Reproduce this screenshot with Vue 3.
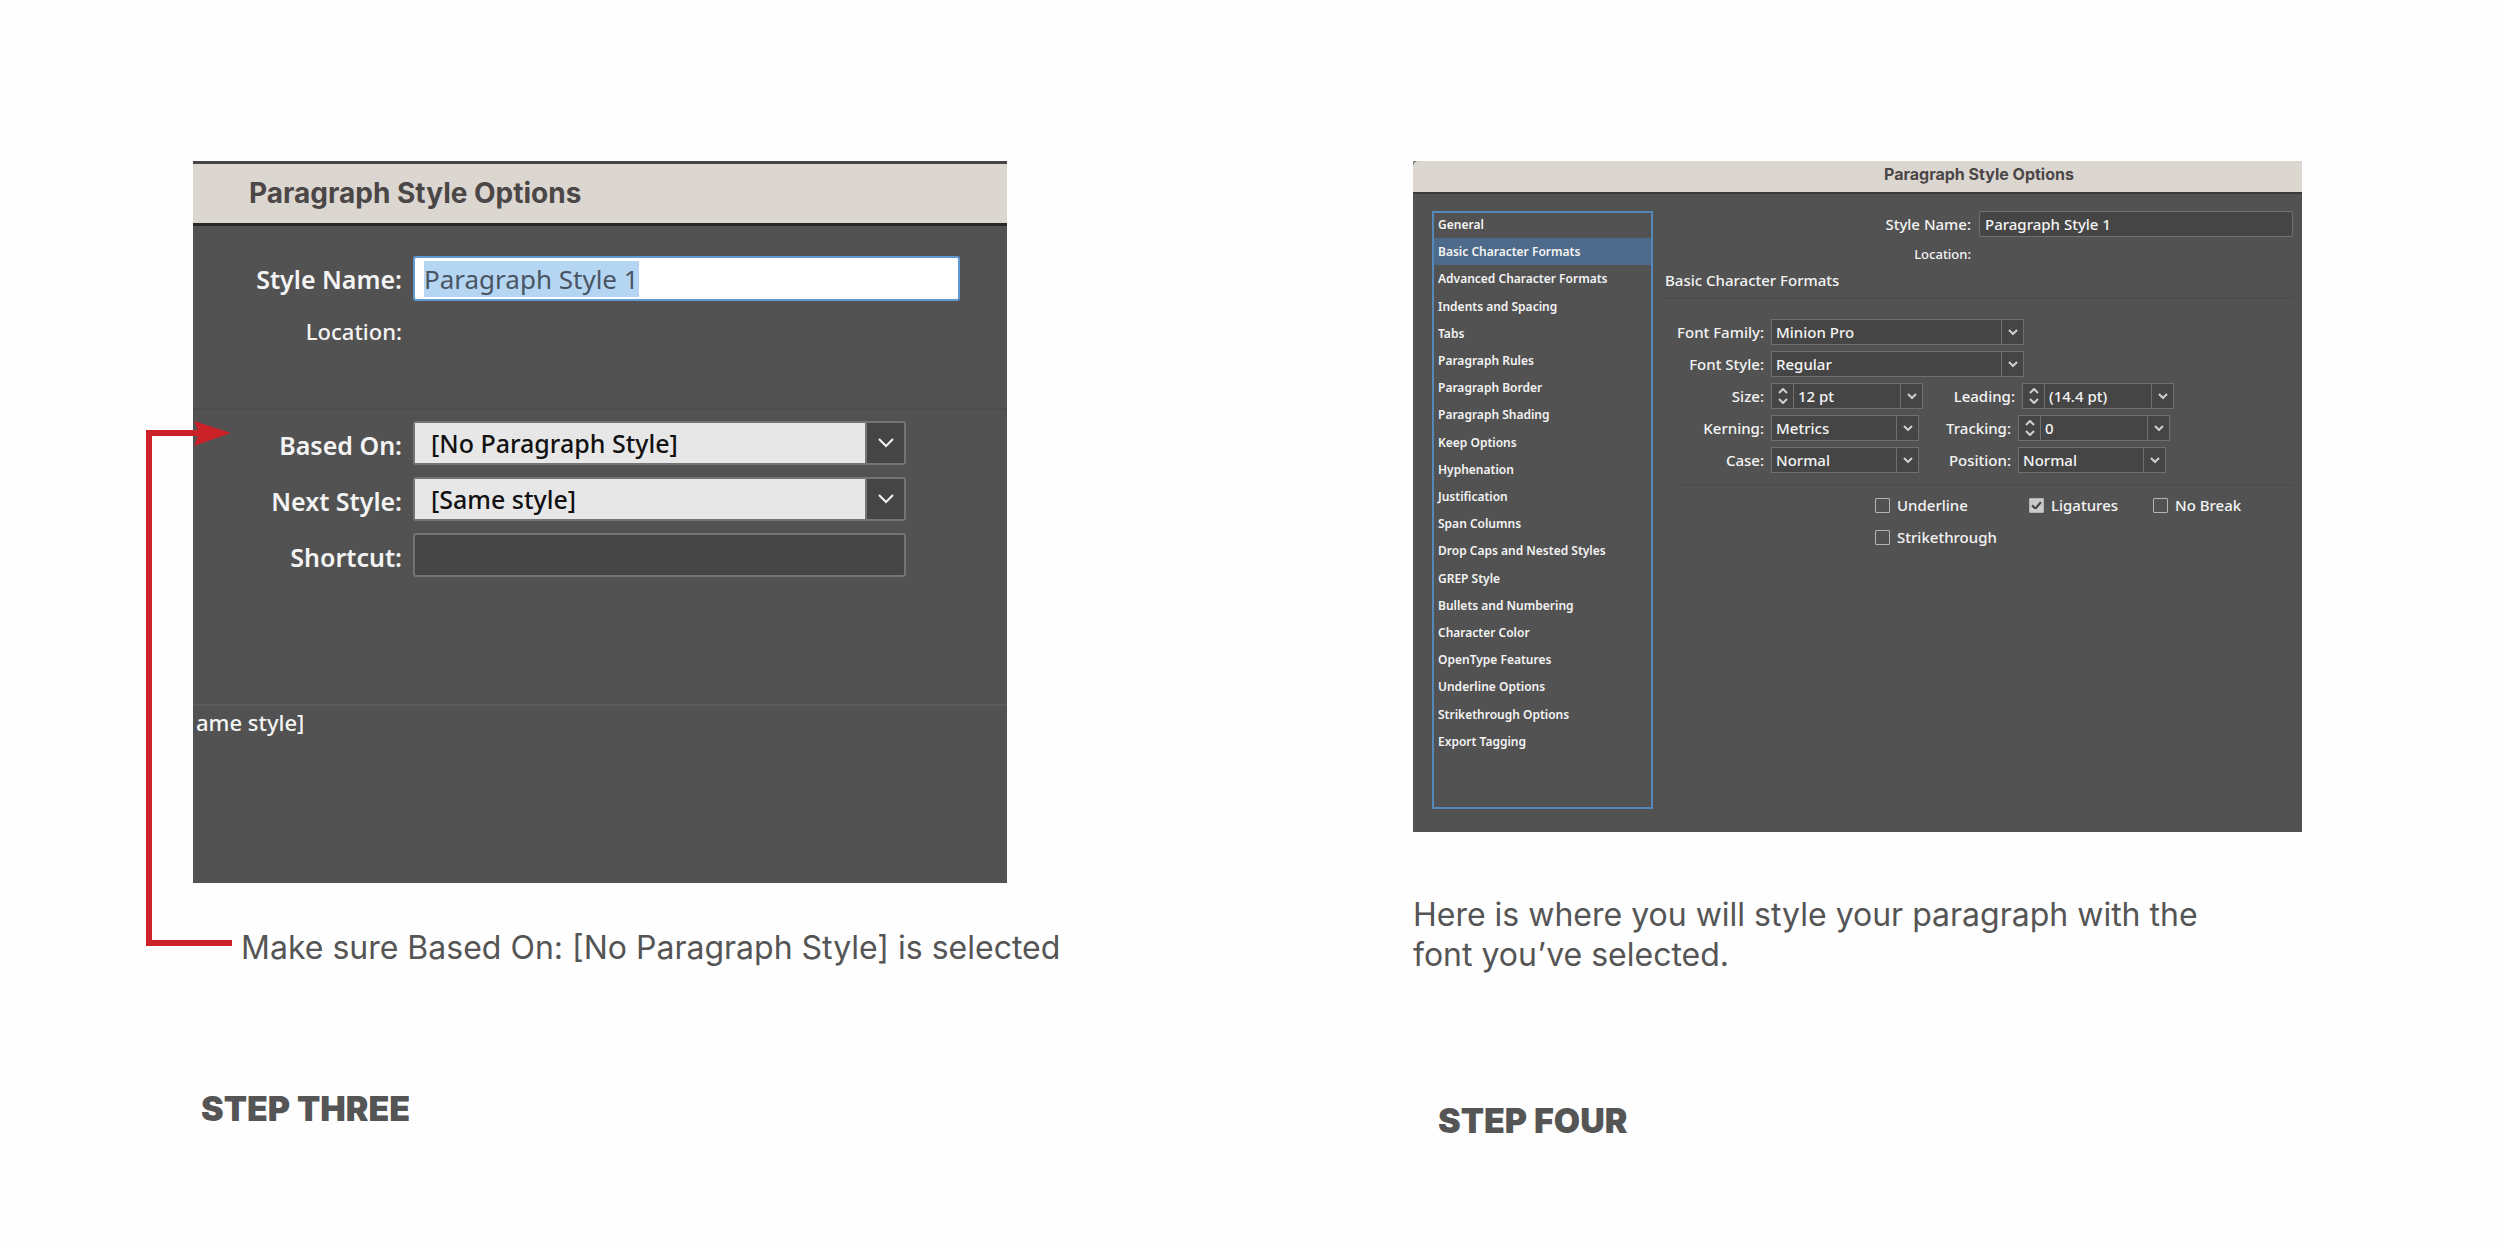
<script setup>
import { onMounted, ref } from 'vue'

const styleName = ref('Paragraph Style 1')
const basedOn = ref('[No Paragraph Style]')
const nextStyle = ref('[Same style]')
const shortcut = ref('')
const nameInput = ref(null)

const categories = [
  'General',
  'Basic Character Formats',
  'Advanced Character Formats',
  'Indents and Spacing',
  'Tabs',
  'Paragraph Rules',
  'Paragraph Border',
  'Paragraph Shading',
  'Keep Options',
  'Hyphenation',
  'Justification',
  'Span Columns',
  'Drop Caps and Nested Styles',
  'GREP Style',
  'Bullets and Numbering',
  'Character Color',
  'OpenType Features',
  'Underline Options',
  'Strikethrough Options',
  'Export Tagging',
]
const active = ref('Basic Character Formats')

const fieldRows = [
  [{ id: 'family', label: 'Font Family:', value: 'Minion Pro', size: 'wide' }],
  [{ id: 'face', label: 'Font Style:', value: 'Regular', size: 'wide' }],
  [
    { id: 'size', label: 'Size:', value: '12 pt', spin: true },
    { id: 'leading', label: 'Leading:', value: '(14.4 pt)', spin: true },
  ],
  [
    { id: 'kerning', label: 'Kerning:', value: 'Metrics' },
    { id: 'tracking', label: 'Tracking:', value: '0', spin: true },
  ],
  [
    { id: 'case', label: 'Case:', value: 'Normal' },
    { id: 'position', label: 'Position:', value: 'Normal' },
  ],
]

const checks = ref([
  { label: 'Underline', on: false },
  { label: 'Ligatures', on: true },
  { label: 'No Break', on: false },
  { label: 'Strikethrough', on: false },
])

onMounted(() => {
  nameInput.value.focus()
  nameInput.value.select()
})
</script>

<template>
  <main class="page">
    <section class="step">
      <div class="dialog general">
        <header class="title">Paragraph Style Options</header>
        <div class="row name-row">
          <label for="g-name">Style Name:</label>
          <input id="g-name" ref="nameInput" v-model="styleName" type="text" spellcheck="false" />
        </div>
        <div class="row location">
          <span>Location:</span>
        </div>
        <hr class="rule" />
        <div class="based">
          <div class="row">
            <label for="g-based">Based On:</label>
            <div class="drop light">
              <select id="g-based" v-model="basedOn">
                <option>[No Paragraph Style]</option>
              </select>
              <span class="arrow"><svg viewBox="0 0 16 10"><path d="M1 1l7 7 7-7" /></svg></span>
            </div>
          </div>
          <div class="row">
            <label for="g-next">Next Style:</label>
            <div class="drop light">
              <select id="g-next" v-model="nextStyle">
                <option>[Same style]</option>
              </select>
              <span class="arrow"><svg viewBox="0 0 16 10"><path d="M1 1l7 7 7-7" /></svg></span>
            </div>
          </div>
          <div class="row">
            <label for="g-short">Shortcut:</label>
            <input id="g-short" v-model="shortcut" class="dark" type="text" />
          </div>
        </div>
        <hr class="rule pale" />
        <p class="summary">ame style]</p>
      </div>
      <svg class="pointer" viewBox="0 0 86 526" aria-hidden="true">
        <path d="M86 522H3V12H56" fill="none" stroke="#cb2128" stroke-width="6" />
        <path d="M48 0L85 12L48 25L53 12Z" fill="#cb2128" />
      </svg>
      <p class="caption indented">Make sure Based On: [No Paragraph Style] is selected</p>
      <h2>STEP THREE</h2>
    </section>

    <section class="step">
      <div class="dialog formats">
        <header class="title">Paragraph Style Options</header>
        <div class="body">
          <ul class="list">
            <li v-for="c in categories" :key="c">
              <button type="button" :class="{ active: c === active }" @click="active = c">{{ c }}</button>
            </li>
          </ul>
          <div class="panel">
            <div class="name-line">
              <label for="f-name">Style Name:</label>
              <input id="f-name" v-model="styleName" type="text" spellcheck="false" />
            </div>
            <p class="location-line">Location:</p>
            <h3>{{ active }}</h3>
            <hr class="rule" />
            <div class="fields">
              <div v-for="(row, i) in fieldRows" :key="i" class="field-row">
                <template v-for="f in row" :key="f.id">
                  <label :for="f.id">{{ f.label }}</label>
                  <div v-if="f.spin" class="drop spin">
                    <span class="stepper">
                      <button type="button" aria-label="Increase"><svg viewBox="0 0 10 6"><path d="M1 5l4-4 4 4" /></svg></button>
                      <button type="button" aria-label="Decrease"><svg viewBox="0 0 10 6"><path d="M1 1l4 4 4-4" /></svg></button>
                    </span>
                    <input :id="f.id" v-model="f.value" type="text" />
                    <button type="button" class="arrow" aria-label="Open list"><svg viewBox="0 0 10 6"><path d="M1 1l4 4 4-4" /></svg></button>
                  </div>
                  <div v-else class="drop" :class="f.size">
                    <select :id="f.id">
                      <option>{{ f.value }}</option>
                    </select>
                    <span class="arrow"><svg viewBox="0 0 10 6"><path d="M1 1l4 4 4-4" /></svg></span>
                  </div>
                </template>
              </div>
            </div>
            <hr class="rule inset" />
            <div class="checks">
              <label v-for="c in checks" :key="c.label">
                <input v-model="c.on" type="checkbox" />
                <svg v-if="c.on" class="tick" viewBox="0 0 10 8"><path d="M1 4l3 3 5-6" /></svg>
                {{ c.label }}
              </label>
            </div>
          </div>
        </div>
      </div>
      <p class="caption">Here is where you will style your paragraph with the<br />font you’ve selected.</p>
      <h2 class="shifted">STEP FOUR</h2>
    </section>
  </main>
</template>

<style>
body {
  margin: 0;
  background: #fefefe;
}
</style>

<style scoped>
.page,
.page * {
  box-sizing: border-box;
}
.page {
  display: grid;
  grid-template-columns: 814fr 889fr;
  column-gap: 406px;
  align-items: start;
  padding: 161px 198px 80px 193px;
  font-family: Inter, 'Liberation Sans', sans-serif;
  color: #555;
}
.step {
  position: relative;
}
p,
h2,
h3,
ul {
  margin: 0;
  padding: 0;
}
input,
select,
button {
  font: inherit;
  color: inherit;
  margin: 0;
  padding: 0;
  border: 0;
  border-radius: 0;
  background: none;
  outline: 0;
  appearance: none;
}
svg {
  display: block;
  fill: none;
  stroke: currentColor;
}
.rule {
  height: 2px;
  margin: 0;
  border: 0;
  background: #4d4d4d;
}
.dialog {
  background: #525252;
  color: #f4f4f4;
  font-family: 'Noto Sans', 'Open Sans', sans-serif;
  font-weight: 500;
}
.title {
  background: #dbd6d0;
  color: #4b4747;
  font-family: Inter, 'Liberation Sans', sans-serif;
  font-weight: 700;
}
.drop {
  position: relative;
  display: flex;
  border: 1px solid #707070;
  background: #454545;
}
.drop select {
  width: 100%;
}
.arrow {
  display: grid;
  place-items: center;
}
.drop span.arrow {
  position: absolute;
  top: 0;
  right: 0;
  bottom: 0;
  pointer-events: none;
}

/* General pane */
.general {
  padding-bottom: 145px;
  font-size: 25px;
}
.general .title {
  padding-left: 56px;
  border-top: 3px solid #454345;
  border-bottom: 3px solid #2a2626;
  font-size: 28px;
  line-height: 59px;
}
.general label {
  font-weight: 600;
}
.row {
  display: grid;
  grid-template-columns: 209px 1fr;
  column-gap: 11px;
  align-items: center;
  text-align: right;
}
.name-row {
  margin-top: 30px;
  padding-right: 47px;
}
.name-row input {
  height: 45px;
  padding: 0 9px;
  border: 2px solid #5f9bd0;
  border-radius: 3px;
  background: #fff;
  color: #4a5564;
  font-size: 26px;
  font-weight: 400;
}
.name-row input::selection {
  background: #b5d6f2;
  color: #4a5564;
}
.location {
  margin-top: 14px;
  font-size: 22px;
  line-height: 32px;
}
.general .rule {
  margin-top: 61px;
}
.based {
  display: grid;
  row-gap: 12px;
  padding: 11px 101px 0 0;
}
.based .drop,
.based input {
  height: 44px;
  border: 2px solid #747474;
  border-radius: 3px;
}
.based label {
  padding-top: 3px;
}
.based input {
  background: #454545;
}
.based select {
  padding-left: 16px;
  background: #e7e7e7;
  color: #111;
}
.based .arrow {
  width: 39px;
  border-left: 2px solid #747474;
  background: #454545;
}
.based .arrow svg {
  width: 16px;
  stroke-width: 2;
}
.general .rule.pale {
  margin-top: 127px;
  background: #5c5c5c;
}
.summary {
  padding-left: 3px;
  font-size: 22px;
  line-height: 32px;
}
.pointer {
  position: absolute;
  top: 260px;
  left: -47px;
  width: 86px;
  height: 526px;
  stroke: none;
}
.caption {
  margin-top: 63px;
  font-size: 32px;
  line-height: 40px;
}
.caption.indented {
  margin: 45px -60px 0 48px;
}
h2 {
  margin: 121px 0 0 8px;
  font-size: 34px;
  font-weight: 900;
  line-height: 40px;
}
h2.shifted {
  margin: 126px 0 0 25px;
}

/* Basic Character Formats pane */
.formats {
  border-top-left-radius: 2px;
  font-size: 15px;
}
.formats .title {
  height: 33px;
  padding-left: 471px;
  border-bottom: 2px solid #3c3a39;
  border-top-left-radius: 5px;
  font-size: 16px;
  line-height: 27px;
}
.body {
  display: flex;
  padding: 17px 9px 23px 19px;
}
.list {
  display: grid;
  grid-auto-rows: 1fr;
  flex: none;
  width: 221px;
  height: 598px;
  padding: 0 2px 54px;
  box-shadow: inset 0 0 0 2px #5488b8;
  list-style: none;
  font-size: 12px;
  font-weight: 600;
}
.list button {
  width: 100%;
  height: 100%;
  padding-left: 4px;
  text-align: left;
}
.list .active {
  background: #4d6a8a;
}
.panel {
  flex: 1;
  padding-left: 12px;
}
.name-line {
  display: grid;
  grid-template-columns: 306px 1fr;
  column-gap: 8px;
  align-items: center;
  text-align: right;
}
.name-line input {
  height: 26px;
  padding: 0 5px;
  border: 1px solid #707070;
  border-radius: 2px;
  background: #454545;
}
.location-line {
  width: 306px;
  margin-top: 7px;
  font-size: 13px;
  line-height: 20px;
  text-align: right;
}
h3 {
  margin-top: 5px;
  font-size: 15px;
  font-weight: 500;
  line-height: 22px;
}
.panel .rule {
  margin-top: 6px;
}
.fields {
  display: grid;
  row-gap: 6px;
  margin-top: 20px;
}
.field-row {
  display: flex;
  align-items: center;
}
.field-row label {
  width: 99px;
  margin-right: 7px;
  text-align: right;
}
.field-row .drop {
  width: 148px;
  height: 26px;
}
.field-row .drop.spin {
  width: 152px;
}
.field-row .drop.wide {
  width: 253px;
}
.field-row .drop + label {
  width: 92px;
}
.field-row select,
.field-row input {
  flex: 1;
  min-width: 0;
  padding-left: 4px;
}
.field-row .arrow {
  width: 22px;
  border-left: 1px solid #707070;
}
.field-row svg {
  width: 10px;
  stroke: #d0d0d0;
  stroke-width: 2;
}
.stepper {
  display: grid;
  align-content: space-evenly;
  justify-items: center;
  width: 22px;
  border-right: 1px solid #707070;
}
.panel .rule.inset {
  margin: 11px 0 0 15px;
}
.checks {
  display: grid;
  grid-template-columns: 154px 124px auto;
  row-gap: 14px;
  padding: 10px 0 0 210px;
}
.checks label {
  position: relative;
  display: flex;
  align-items: center;
  gap: 7px;
  line-height: 18px;
}
.checks input {
  width: 15px;
  height: 15px;
  border: 1px solid #b4b4b4;
  border-radius: 1px;
}
.checks input:checked {
  background: #cacaca;
}
.tick {
  position: absolute;
  left: 2px;
  width: 11px;
  stroke: #444;
  stroke-width: 2;
  pointer-events: none;
}
</style>
